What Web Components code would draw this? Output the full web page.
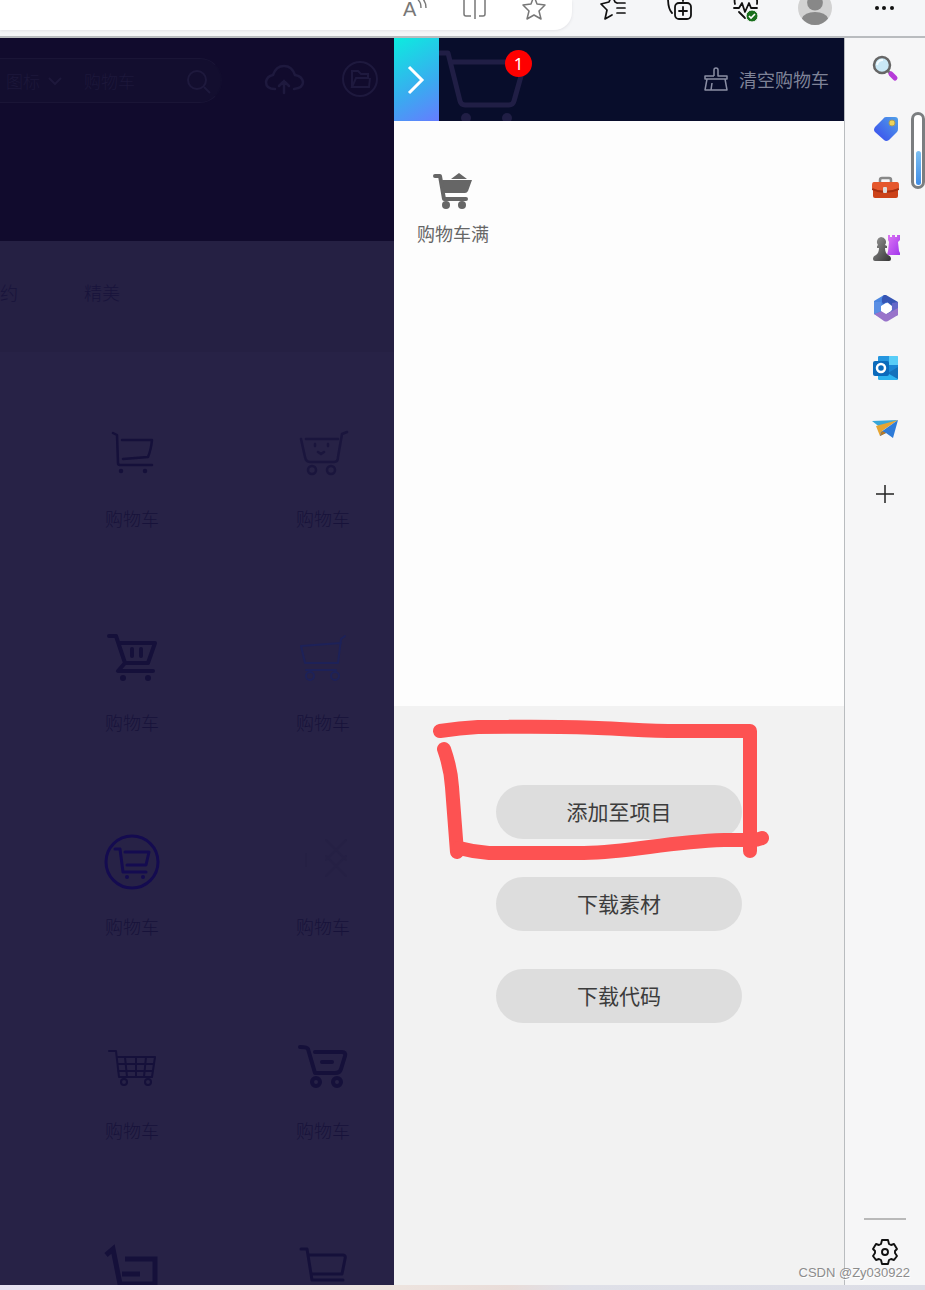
<!DOCTYPE html>
<html lang="zh-CN">
<head>
<meta charset="utf-8">
<meta name="viewport" content="width=device-width, initial-scale=1">
<title>购物车</title>
<style>
  body {
    margin: 0;
    font-family: "Noto Sans CJK SC", "Noto Sans", sans-serif;
    background: #f6f6f8;
  }
</style>
</head>
<body>
<browser-window></browser-window>

<script>
const ICONS = {
  // toolbar, 26 x 26
  read: `<text x="2" y="22" font-family="Liberation Sans" font-size="20" fill="#777">A</text><path d="M17 6q3 2 3 8M20 3q5 4 5 11" fill="none" stroke="#777" stroke-width="1.4"/>`,
  split: `<g fill="none" stroke="#777" stroke-width="1.5"><path d="M10 22H5q-2 0-2-2V4q0-2 2-2h5M14 0v25M16 2h6q2 0 2 2v16q0 2-2 2h-4"/></g>`,
  star: `<path d="M13 2l3 8 8 1-6 6 2 8-7-4-7 4 2-8-6-6 8-1z" fill="none" stroke="#777" stroke-width="1.5" stroke-linejoin="round"/>`,
  favorites: `<g fill="none" stroke="#111" stroke-width="1.7" stroke-linecap="round" stroke-linejoin="round"><path d="M17 9l-2-1-3-7-3 7-8 2 6 6-2 9 7-4M17 9h8M17 14h8M17 19h8"/></g>`,
  collections: `<g fill="none" stroke="#111" stroke-width="1.8" stroke-linecap="round"><rect x="9" y="9" width="16" height="16" rx="4"/><path d="M17 13v8M13 17h8M2 4q0 11 4 15M17 7V4"/></g>`,
  health: `<g fill="none" stroke="#111" stroke-width="1.8" stroke-linecap="round" stroke-linejoin="round"><path d="M3 10q-2-8 5-9 4 0 6 4 2-4 6-4 6 1 5 9M2 14h5l3-5 3 9 4-9 2 5h6M7 18l6 6"/></g><circle cx="20" cy="22" r="6" fill="#1a701d" stroke="#f6f6f8"/><path d="M17 22l2 2 4-4" fill="none" stroke="#fff" stroke-width="1.6"/>`,
  avatar: `<circle cx="13" cy="13" r="13" fill="#d2d2d2"/><circle cx="13" cy="9" r="6" fill="#888"/><path d="M3 21q2-5 10-5t10 5q-4 5-10 5T3 21z" fill="#888"/>`,
  more: `<g fill="#111"><circle cx="5" cy="14" r="2"/><circle cx="12" cy="14" r="2"/><circle cx="20" cy="14" r="2"/></g>`,

  // side rail, 28 x 28
  search: `<path d="M17 17l3 3" stroke="#777" stroke-width="3"/><path d="M20 20l4 4" stroke="#b63bd8" stroke-width="5" stroke-linecap="round"/><circle cx="11" cy="11" r="8" fill="#c9e8f6" stroke="#666" stroke-width="2.5"/><path d="M6 11q1-5 6-5" stroke="#f2fbff" stroke-width="2" fill="none"/>`,
  tag: `<defs><linearGradient id="t" x1="0" y1="1" x2="1" y2="0"><stop stop-color="#3948ee"/><stop offset="1" stop-color="#50a0e8"/></linearGradient></defs><path d="M15 3h9q3 0 3 3v9q0 2-1 3l-8 8q-3 2-5 0l-9-8q-2-2 0-5l8-8q1-2 3-2z" fill="url(#t)"/><circle cx="21" cy="9" r="3" fill="#ecd35c" stroke="#a99d56"/>`,
  tools: `<path d="M9 10V6q0-2 2-2h7q2 0 2 2v4" fill="none" stroke="#888" stroke-width="2.5"/><rect x="2" y="12" width="25" height="12" rx="2" fill="#cc4219"/><path d="M3 8h23q2 0 2 3v3q-7 3-14 3T1 14v-3q0-3 2-3z" fill="#e5582d"/><path d="M1 14q6 3 13 3t14-3v2q-7 3-14 3T1 16z" fill="#a72f11"/><rect x="12" y="13" width="4" height="6" rx="1" fill="#ddd"/>`,
  games: `<defs><linearGradient id="r" x2="1" y2="1"><stop stop-color="#df78f4"/><stop offset="1" stop-color="#a136ec"/></linearGradient><linearGradient id="p" x2="1" y2="1"><stop stop-color="#999"/><stop offset="1" stop-color="#333"/></linearGradient></defs><path d="M17 1h2v2h2V1h3v2h2V1h3v5l-2 2 1 9 1 2v2H16l1-4 1-9-1-2z" fill="url(#r)"/><path d="M10 3a5 5 0 0 1 4 8l2 1v2h-2q0 5 3 7 3 1 3 4 0 2-2 2H4q-2 0-2-2 0-3 3-4 3-2 3-7H6v-2l1-1a5 5 0 0 1 3-8z" fill="url(#p)"/>`,
  office: `<path d="M13 1L3 7v13l8 4V12l8-5z" fill="#4b86e0"/><path d="M13 1q-4 4-1 9l4-2 5 4 6 5V8L15 1z" fill="#3655b4"/><path d="M27 8v13l-9 3-3-4 6-4V9z" fill="#6468c8"/><path d="M3 20l8-3 5 3 11-6v7l-10 6q-2 1-4 0z" fill="#9873ca"/><path d="M3 8v12l7-3V8z" fill="#5a8fe4"/><path d="M15 9l5 3v5l-5 3-5-3v-5z" fill="#fff"/>`,
  outlook: `<rect x="7" y="2" width="20" height="24" rx="2" fill="#1a86d4"/><path d="M8 2h10v9H7V3z" fill="#2596df"/><path d="M18 2h8q1 0 1 1v8h-9z" fill="#58cdf7"/><path d="M7 14l20 11q0 1-2 1H9q-2 0-2-2z" fill="#2cb3ef"/><path d="M27 13v12l-10-6z" fill="#1471bb"/><rect x="2" y="7" width="16" height="15" rx="2" fill="#0b6abb"/><circle cx="10" cy="14" r="4" fill="none" stroke="#fff" stroke-width="2.5"/>`,
  send: `<path d="M1 7l26-1-17 8z" fill="#39a7d9"/><path d="M5 12l22-6-16 11-2 5z" fill="#e6a532"/><path d="M9 22l1-4L27 6l-5 18-7-5z" fill="#2e7bd8"/><path d="M9 22l2-5 4 2z" fill="#b97a24"/>`,
  plus: `<path d="M14 5v18M5 14h18" stroke="#222" stroke-width="1.5"/>`,
  // 26 x 26
  gear: `<g fill="none" stroke="#111" stroke-width="1.9" stroke-linejoin="round"><path d="M10 1h6l1 4 2 1 3-1 3 5-2 2v2l2 3-3 4-3-1-2 1-1 4h-6l-1-4-2-1-3 1-3-4 2-3v-2l-2-2 3-5 3 1 2-1z"/><circle cx="13" cy="13" r="3"/></g>`,

  // site header, 40 x 40
  zoom: `<g fill="none" stroke="#1e193d" stroke-width="2"><circle cx="16" cy="19" r="9"/><path d="M23 26l6 6"/></g>`,
  upload: `<g fill="none" stroke="#1e193e" stroke-width="2.5" stroke-linecap="round"><path d="M11 29q-9 0-9-7 1-6 7-7 3-9 11-9t11 9q7 1 8 7 0 6-9 7M20 33V21M15 26l5-5 5 5"/></g>`,
  folder: `<g fill="none" stroke="#1e193e" stroke-width="2"><circle cx="20" cy="19" r="17"/><path d="M12 27V11h6l3 3h7v4H16l-4 9h17l1-9"/></g>`,

  // drawer
  chevron: `<path d="M15 8l13 13-13 13" fill="none" stroke="#fff" stroke-width="3"/>`,
  outline: `<g fill="none" stroke="#201e45" stroke-width="5" stroke-linejoin="round"><path d="M0 15h9l12 48q1 4 5 4h44q4 0 5-4l11-39H12"/></g><g fill="#201e45"><circle cx="27" cy="80" r="5"/><circle cx="68" cy="80" r="5"/></g>`,
  broom: `<g fill="none" stroke="#8a8ea4" stroke-width="1.5" stroke-linejoin="round"><path d="M10 9V3q0-2 2-2t2 2v6h9v3H1V9h9M3 12L1 23h22l-2-11M8 16l-1 7"/></g>`,
  full: `<g fill="#666"><path d="M9 9h30l-4 11q-1 2-3 2H11zM18 8l8-6 8 6z"/><circle cx="13" cy="34" r="4"/><circle cx="29" cy="34" r="4"/></g><path d="M2 5h5l4 23h22" fill="none" stroke="#666" stroke-width="4" stroke-linecap="round" stroke-linejoin="round"/>`
};

// catalogue icons share a 54 x 54 box
const CARTS = [
  `<path d="M8 5l4 2 1 28q0 2 2 2h32M17 12h30q-1 10-4 17l-25 2"/><circle cx="16" cy="43" r="1"/><circle cx="40" cy="43" r="1"/>`,
  `<g opacity=".7"><path d="M5 11l4 18q1 5 5 5h24q4 0 4-5l4-23 5-2M10 11h32M19 16v2M32 16v2M22 24l3 2 3-2"/><circle cx="16" cy="42" r="4"/><circle cx="35" cy="42" r="4"/></g>`,
  `<g stroke-width="4"><path d="M4 4h7l9 27-7 8h35M14 11h36l-7 20H20M27 17v7M36 17v7"/></g><g fill="#15103a" stroke="none"><circle cx="18" cy="46" r="3"/><circle cx="43" cy="46" r="3"/></g>`,
  `<g stroke="#1d2158" stroke-width="2"><path d="M49 4l-4 3-3 24H9L5 14l40-3M10 38h30"/><circle cx="14" cy="44" r="4"/><circle cx="39" cy="44" r="4"/></g>`,
  `<g stroke="#140b50" stroke-width="3"><circle cx="27" cy="26" r="26"/><path d="M10 13h5l3 23h23M20 16h24l-3 13H22"/></g><g fill="#140b50" stroke="none"><circle cx="22" cy="41" r="2"/><circle cx="38" cy="41" r="2"/></g>`,
  `<g stroke="#252044" stroke-width="2"><path d="M30 4l20 20M30 20l20 20M50 4L30 24M50 20L30 40M10 18v12"/></g>`,
  `<g stroke-width="2"><path d="M4 11h7l3 26h33l3-20H12M13 24h36M13 31h35M20 17l2 20M31 17v20M41 17l-2 20"/><circle cx="19" cy="42" r="3"/><circle cx="43" cy="42" r="3"/></g>`,
  `<g stroke-width="4"><path d="M4 7q7 0 8 2l7 24h20q5 0 6-4l4-13q1-4-3-4H19M26 22h10"/><circle cx="20" cy="42" r="4"/><circle cx="41" cy="42" r="4"/></g>`,
  `<g stroke-width="5" stroke-linecap="butt" stroke-linejoin="miter"><path d="M1 11l7-6 7 35h35V15H20M17 30h18"/></g>`,
  `<g stroke-width="3"><path d="M5 5h6l5 31h31M13 11h34q3 0 2 4l-3 15H16"/></g>`
];

// the last row shows its icons only
const LABELLED = 8;

class UiIcon extends HTMLElement {
  constructor() {
    super();
    this.attachShadow({ mode: "open" });
  }

  connectedCallback() {
    const name = this.getAttribute("name");
    const width = this.getAttribute("width") || 26;
    const height = this.getAttribute("height") || width;
    const box = name === "avatar" ? "0 0 26 26" : `0 0 ${width} ${height}`;

    this.shadowRoot.innerHTML = `
      <style>
        :host { display: block; flex: none; }
        svg { display: block; overflow: visible; }
      </style>
      <svg width="${width}" height="${height}" viewBox="${box}" aria-hidden="true">${ICONS[name]}</svg>
    `;
  }
}

class IconTile extends HTMLElement {
  constructor() {
    super();
    this.attachShadow({ mode: "open" });
  }

  connectedCallback() {
    const cart = CARTS[Number(this.getAttribute("cart"))];

    this.shadowRoot.innerHTML = `
      <style>
        :host { display: block; }
        a {
          display: flex;
          flex-direction: column;
          align-items: center;
          gap: 24px;
          color: #17123a;
          font-size: 18px;
          font-weight: 300;
          line-height: 24px;
          text-decoration: none;
        }
        svg {
          overflow: visible;
          fill: none;
          stroke: #15103a;
          stroke-width: 2.5;
          stroke-linecap: round;
          stroke-linejoin: round;
        }
      </style>
      <a href="#">
        <svg width="54" height="54" viewBox="0 0 54 54" aria-hidden="true">${cart}</svg>
        <slot></slot>
      </a>
    `;
  }
}

class BrowserToolbar extends HTMLElement {
  constructor() {
    super();
    this.attachShadow({ mode: "open" });
    this.shadowRoot.innerHTML = `
      <style>
        :host {
          display: flex;
          align-items: flex-start;
          height: 36px;
          border-bottom: 2px solid #b9bcbf;
          background: #f5f6f8;
          overflow: hidden;
        }
        .address, .actions { display: flex; }
        .address {
          flex: 1;
          justify-content: flex-end;
          gap: 34px;
          height: 30px;
          padding-right: 25px;
          background: #fff;
          border-bottom-right-radius: 18px;
          box-shadow: 0 1px 3px #e2e2e6;
        }
        .actions {
          gap: 40px;
          padding: 0 27px 0 28px;
        }
        button {
          padding: 0;
          margin-top: -6px;
          height: 26px;
          border: none;
          background: none;
        }
        .profile { margin-top: -9px; }
      </style>
      <div class="address">
        <button aria-label="朗读"><ui-icon name="read"></ui-icon></button>
        <button aria-label="分屏"><ui-icon name="split"></ui-icon></button>
        <button aria-label="收藏"><ui-icon name="star"></ui-icon></button>
      </div>
      <div class="actions">
        <button aria-label="收藏夹"><ui-icon name="favorites"></ui-icon></button>
        <button aria-label="集锦"><ui-icon name="collections"></ui-icon></button>
        <button aria-label="性能"><ui-icon name="health"></ui-icon></button>
        <button class="profile" aria-label="个人资料"><ui-icon name="avatar" width="34"></ui-icon></button>
        <button aria-label="更多"><ui-icon name="more"></ui-icon></button>
      </div>
    `;
  }
}

class SiteHeader extends HTMLElement {
  constructor() {
    super();
    this.attachShadow({ mode: "open" });
    this.shadowRoot.innerHTML = `
      <style>
        :host {
          box-sizing: border-box;
          display: flex;
          align-items: flex-start;
          justify-content: space-between;
          height: 203px;
          padding: 20px 14px 0 0;
          background: #110b2d;
        }
        form {
          display: flex;
          align-items: center;
          box-sizing: border-box;
          width: 222px;
          height: 45px;
          border: 1px solid #1a1536;
          border-left: none;
          border-right-color: #130e2f;
          border-radius: 0 22px 22px 0;
          background: #130e2f;
        }
        select, input {
          box-sizing: border-box;
          border: none;
          padding: 0;
          background: none;
          color: #1d183b;
          font: 300 17px/24px "Noto Sans CJK SC", sans-serif;
        }
        select {
          appearance: none;
          width: 40px;
          margin-left: 6px;
        }
        input {
          flex: 1;
          min-width: 0;
          padding-left: 20px;
        }
        button {
          padding: 0;
          border: none;
          background: none;
        }
        nav {
          display: flex;
          gap: 36px;
          padding-top: 2px;
        }
      </style>
      <form>
        <select aria-label="类型"><option>图标</option></select>
        <svg width="18" height="12" viewBox="0 0 18 12" aria-hidden="true">
          <path d="M3 3l6 6 6-6" fill="none" stroke="#1d183b" stroke-width="2"/>
        </svg>
        <input aria-label="搜索" value="购物车">
        <button type="button" aria-label="搜索"><ui-icon name="zoom" width="40"></ui-icon></button>
      </form>
      <nav>
        <a href="#" aria-label="上传"><ui-icon name="upload" width="40"></ui-icon></a>
        <a href="#" aria-label="项目"><ui-icon name="folder" width="40"></ui-icon></a>
      </nav>
    `;
  }
}

class IconCatalogue extends HTMLElement {
  constructor() {
    super();
    this.attachShadow({ mode: "open" });
    this.shadowRoot.innerHTML = `
      <style>
        :host {
          display: block;
          min-width: 0;
          overflow: hidden;
          background: #272246;
        }
        .filters {
          display: flex;
          align-items: center;
          gap: 66px;
          box-sizing: border-box;
          height: 111px;
          padding-bottom: 10px;
          background: #252043;
        }
        .filters a {
          color: #18133b;
          font-size: 18px;
          font-weight: 300;
          line-height: 24px;
          text-decoration: none;
        }
        .tiles {
          display: grid;
          grid-template-columns: 1fr 1fr;
          grid-auto-rows: 204px;
          column-gap: 83px;
          padding: 76px 17px 0 78px;
        }
      </style>
      <site-header></site-header>
      <div class="filters">
        <a href="#">约</a>
        <a href="#">精美</a>
      </div>
      <div class="tiles">
        ${CARTS.map((cart, i) => `<icon-tile cart="${i}">${i < LABELLED ? "购物车" : ""}</icon-tile>`).join("")}
      </div>
    `;
  }
}

class PillButton extends HTMLElement {
  constructor() {
    super();
    this.attachShadow({ mode: "open" });
    this.shadowRoot.innerHTML = `
      <style>
        :host { display: block; }
        button {
          display: block;
          width: 246px;
          height: 54px;
          padding: 0 0 2px;
          border: none;
          border-radius: 27px;
          background: #ddd;
          color: #3c3c3c;
          font: 21px/30px "Noto Sans CJK SC", sans-serif;
          cursor: pointer;
        }
      </style>
      <button type="button"><slot></slot></button>
    `;
  }
}

class CartDrawer extends HTMLElement {
  constructor() {
    super();
    this.attachShadow({ mode: "open" });
    this.shadowRoot.innerHTML = `
      <style>
        :host {
          display: flex;
          flex-direction: column;
          min-height: 0;
          background: #fdfdfd;
        }
        header {
          display: flex;
          height: 83px;
          background: #080d2b;
          overflow: hidden;
        }
        button {
          padding: 0;
          border: none;
          background: none;
          cursor: pointer;
        }
        .toggle {
          display: flex;
          align-items: center;
          width: 45px;
          background: linear-gradient(150deg, #0cecdf, #3aaaf0 60%, #667cff);
        }
        .count { position: relative; }
        .badge {
          position: absolute;
          top: 12px;
          left: 66px;
          width: 27px;
          height: 27px;
          border-radius: 50%;
          background: #f00;
          color: #fff;
          font: 17px/27px "Noto Sans", sans-serif;
          text-align: center;
        }
        .clear {
          display: flex;
          align-items: center;
          gap: 11px;
          margin-left: auto;
          padding: 0 15px 2px 0;
          color: #7f8398;
          font: 18px/24px "Noto Sans CJK SC", sans-serif;
        }
        .items {
          flex: 1;
          display: flex;
          align-items: flex-start;
          padding: 50px 23px 0;
        }
        figure {
          display: flex;
          flex-direction: column;
          align-items: center;
          gap: 10px;
          margin: 0;
        }
        figcaption {
          color: #666;
          font-size: 18px;
          line-height: 24px;
        }
        .actions {
          position: relative;
          display: flex;
          flex-direction: column;
          align-items: center;
          gap: 38px;
          padding: 79px 0 262px;
          background: #f2f2f2;
        }
        .marker {
          position: absolute;
          top: 0;
          left: 0;
          pointer-events: none;
        }
      </style>
      <header>
        <button class="toggle" type="button" aria-label="收起"><ui-icon name="chevron" width="45" height="42"></ui-icon></button>
        <div class="count">
          <ui-icon name="outline" width="92" height="83"></ui-icon>
          <span class="badge">1</span>
        </div>
        <button class="clear" type="button"><ui-icon name="broom" width="24"></ui-icon>清空购物车</button>
      </header>
      <div class="items">
        <figure>
          <ui-icon name="full" width="40"></ui-icon>
          <figcaption>购物车满</figcaption>
        </figure>
      </div>
      <div class="actions">
        <pill-button>添加至项目</pill-button>
        <pill-button>下载素材</pill-button>
        <pill-button>下载代码</pill-button>
        <svg class="marker" width="400" height="170" viewBox="0 0 400 170" aria-hidden="true">
          <g fill="none" stroke="#fd5252" stroke-width="14" stroke-linecap="round" stroke-linejoin="round">
            <path d="M46 25q20-3 38-4c40 0 80-1 120 1 30 1 50 3 80 3h72v120"/>
            <path d="M50 43q7 20 8 38l5 65"/>
            <path d="M65 142q15 4 30 5h95c50-1 80-11 140-13h27q7 0 11-2"/>
          </g>
        </svg>
      </div>
    `;
  }
}

class SideRail extends HTMLElement {
  constructor() {
    super();
    this.attachShadow({ mode: "open" });
    this.shadowRoot.innerHTML = `
      <style>
        :host {
          position: relative;
          display: flex;
          flex-direction: column;
          align-items: center;
          gap: 32px;
          padding: 16px 0 20px;
          border-left: 1px solid #b9bcbf;
          background: #f6f6f7;
        }
        button {
          padding: 0;
          border: none;
          background: none;
        }
        .add { margin-top: 6px; }
        .bottom {
          display: flex;
          flex-direction: column;
          align-items: center;
          gap: 19px;
          margin-top: auto;
        }
        hr {
          width: 42px;
          margin: 0;
          border: none;
          border-top: 2px solid #b9b9b9;
        }
        .scroll {
          position: absolute;
          top: 74px;
          right: 0;
          display: flex;
          align-items: flex-end;
          justify-content: center;
          box-sizing: border-box;
          width: 14px;
          height: 77px;
          padding-bottom: 1px;
          border: 3px solid #7b7e80;
          border-radius: 7px;
          background: #fff;
        }
        .scroll span {
          width: 5px;
          height: 34px;
          border-radius: 3px;
          background: linear-gradient(#7cc0f2, #3f8de6);
        }
      </style>
      <button aria-label="搜索"><ui-icon name="search" width="28"></ui-icon></button>
      <button aria-label="购物"><ui-icon name="tag" width="28"></ui-icon></button>
      <button aria-label="工具"><ui-icon name="tools" width="28"></ui-icon></button>
      <button aria-label="游戏"><ui-icon name="games" width="28"></ui-icon></button>
      <button aria-label="办公"><ui-icon name="office" width="28"></ui-icon></button>
      <button aria-label="邮件"><ui-icon name="outlook" width="28"></ui-icon></button>
      <button aria-label="发送"><ui-icon name="send" width="28"></ui-icon></button>
      <button class="add" aria-label="添加"><ui-icon name="plus" width="28"></ui-icon></button>
      <div class="bottom">
        <hr>
        <button aria-label="设置"><ui-icon name="gear"></ui-icon></button>
      </div>
      <div class="scroll"><span></span></div>
    `;
  }
}

class BrowserWindow extends HTMLElement {
  constructor() {
    super();
    this.attachShadow({ mode: "open" });
    this.shadowRoot.innerHTML = `
      <style>
        :host {
          position: relative;
          display: flex;
          flex-direction: column;
          height: 100vh;
          overflow: hidden;
        }
        main {
          flex: 1;
          display: grid;
          grid-template-columns: 1fr 450px 81px;
          grid-template-rows: minmax(0, 1fr);
          min-height: 0;
        }
        side-rail { box-sizing: border-box; }
        .desktop {
          height: 5px;
          background: linear-gradient(90deg, #e6e1f0, #efe7ee 20%, #eee5e0 40%, #e9dcd8 55%, #dfe0e8 62%, #dcdde6);
        }
        .watermark {
          position: absolute;
          right: 15px;
          bottom: 9px;
          color: #8c8c8c;
          font: 13px/16px "Liberation Sans", sans-serif;
          text-shadow: 1px 1px #fff;
        }
      </style>
      <browser-toolbar></browser-toolbar>
      <main>
        <icon-catalogue></icon-catalogue>
        <cart-drawer></cart-drawer>
        <side-rail></side-rail>
      </main>
      <div class="desktop"></div>
      <div class="watermark">CSDN @Zy030922</div>
    `;
  }
}

customElements.define("ui-icon", UiIcon);
customElements.define("icon-tile", IconTile);
customElements.define("browser-toolbar", BrowserToolbar);
customElements.define("site-header", SiteHeader);
customElements.define("icon-catalogue", IconCatalogue);
customElements.define("pill-button", PillButton);
customElements.define("cart-drawer", CartDrawer);
customElements.define("side-rail", SideRail);
customElements.define("browser-window", BrowserWindow);
</script>
</body>
</html>
